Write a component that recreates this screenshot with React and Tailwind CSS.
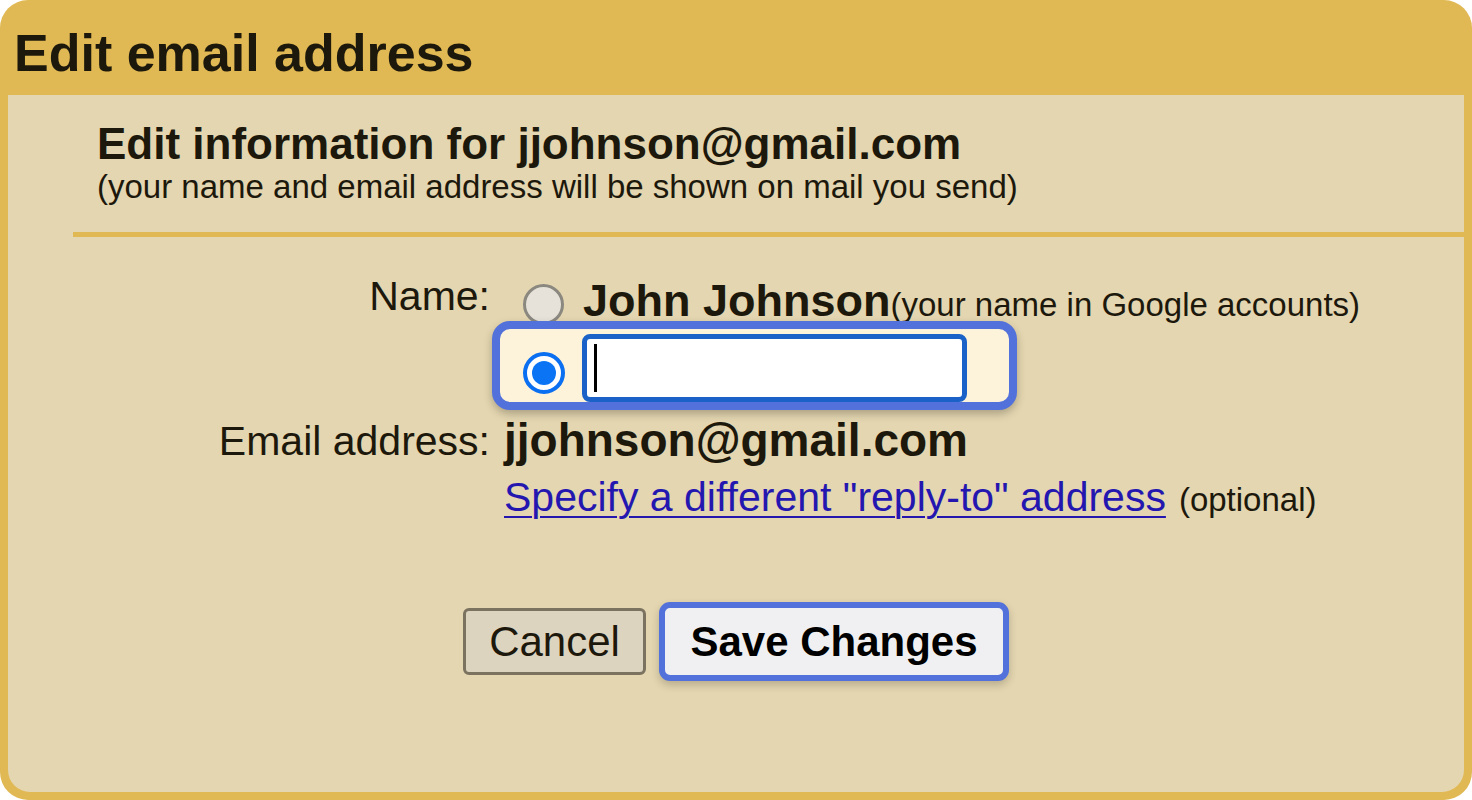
import React from 'react';

const font = "font-['Liberation_Sans',Arial,Helvetica,sans-serif]";

function Radio({ checked, className = "" }) {
  if (checked) {
    return (
      <span className={`flex h-[42px] w-[42px] shrink-0 items-center justify-center rounded-full border-[4px] border-[#0a6ff0] bg-white ${className}`}>
        <span className="h-[24px] w-[24px] rounded-full bg-[#0a74f5]"></span>
      </span>
    );
  }
  return (
    <span className={`block h-[41px] w-[41px] shrink-0 rounded-full border-[3px] border-[#8b8880] bg-[#e6e2da] ${className}`}></span>
  );
}

export default function App() {
  return (
    <div className={`h-[800px] w-full bg-white ${font} text-[#1d180c]`}>
      <div className="flex h-full flex-col rounded-[28px] bg-[#e1b954]">
        {/* header */}
        <div className="h-[95px] shrink-0 pl-[14px] pt-[27px]">
          <h1 className="text-[52px] font-bold leading-[52px]">Edit email address</h1>
        </div>

        {/* panel */}
        <div className="mx-[8px] mb-[8px] flex-1 rounded-b-[22px] bg-[#e4d6b0]">
          <div className="ml-[65px] border-b-[5px] border-[#e1b954] pb-[29px] pl-[24px] pt-[27px]">
            <h2 className="text-[44px] font-bold leading-[44px]">Edit information for jjohnson@gmail.com</h2>
            <p className="mt-[4px] text-[33px] leading-[33px]">(your name and email address will be shown on mail you send)</p>
          </div>

          {/* name */}
          <div className="mt-[39px] flex">
            <div className="w-[482px] shrink-0 text-right text-[41px] leading-[41px]">Name:</div>
            <div className="ml-[14px] flex flex-col">
              <div className="flex items-start">
                <Radio className="ml-[19px] mt-[8px]" />
                <div className="ml-[19px] mt-[2px] flex items-baseline">
                  <span className="text-[45px] font-bold leading-[45px]">John Johnson</span>
                  <span className="text-[33px] leading-[33px]">(your name in Google accounts)</span>
                </div>
              </div>
              <div className="relative -ml-[12px] -mt-[4px] flex h-[89px] w-[525px] items-start rounded-[18px] border-[8px] border-[#5271db] bg-[#fdf3da] pl-[23px] shadow-[0_4px_8px_rgba(0,0,0,0.25)]">
                <Radio checked className="mt-[23px]" />
                <div className="ml-[17px] mt-[5px] flex h-[68px] w-[385px] items-center rounded-[8px] border-[5px] border-[#1b62c8] bg-white">
                  <span className="ml-[7px] block h-[48px] w-[3px] bg-black"></span>
                </div>
              </div>
            </div>
          </div>

          {/* email */}
          <div className="mt-[7px] flex items-start">
            <div className="w-[482px] shrink-0 pt-[4px] text-right text-[41px] leading-[41px]">Email address:</div>
            <div className="ml-[14px] flex flex-col">
              <div className="text-[46px] font-bold leading-[46px]">jjohnson@gmail.com</div>
              <div className="mt-[14px] flex items-baseline">
                <a href="#" className="text-[41px] leading-[41px] text-[#2417b0] underline decoration-[2px] underline-offset-[5px]">Specify a different "reply-to" address</a>
                <span className="ml-[13px] text-[33px] leading-[33px]">(optional)</span>
              </div>
            </div>
          </div>

          {/* buttons */}
          <div className="mt-[84px] flex items-center gap-[13px] pl-[455px]">
            <button className="h-[67px] w-[183px] rounded-[6px] border-[3px] border-[#7b7260] bg-[#ddd4c0] text-[42px] leading-none text-[#1d180c]">
              Cancel
            </button>
            <button className="flex h-[79px] w-[350px] items-center justify-center rounded-[11px] border-[6px] border-[#5271db] bg-[#f0f0f2] text-[42px] font-bold leading-none text-black shadow-[0_4px_8px_rgba(0,0,0,0.2)]">
              Save Changes
            </button>
          </div>
        </div>
      </div>
    </div>
  );
}
